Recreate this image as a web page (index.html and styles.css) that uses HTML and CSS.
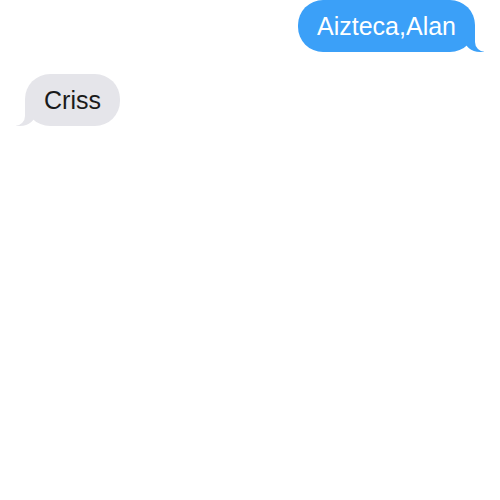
FILE: index.html
```html
<!DOCTYPE html>
<html lang="en">
<head>
  <meta charset="UTF-8"/>
  <title>Chat</title>
  <link rel="stylesheet" href="styles.css">
</head>
<body>
  <div class="chat">
    <div class="row me">
      <div class="bubble sent">Aizteca,Alan</div>
    </div>
    <div class="row them">
      <div class="bubble received">Criss</div>
    </div>
  </div>
</body>
</html>
```
FILE: styles.css
```css
* {
  margin: 0; padding: 0;
  box-sizing: border-box;
}

body {
  font-family: "Liberation Sans", Arial, sans-serif;
  background: #fff;
}

.chat {
  display: flex;
  flex-direction: column;
  gap: 22px;
  padding: 0 25px;
}

.row {
  display: flex;
}

.row.me { justify-content: flex-end; }
.row.them { justify-content: flex-start; }

.bubble {
  position: relative;
  font-size: 25px;
  line-height: 28px;
  padding: 12px 19px;
  border-radius: 25px;
}

.sent {
  background: #3ba0f8;
  color: #fff;
}

.received {
  background: #e5e5ea;
  color: #1a1a1a;
}

/* tails */
.bubble::before,
.bubble::after {
  content: "";
  position: absolute;
  bottom: 0;
  height: 25px;
}

.sent::before {
  right: -9px;
  width: 20px;
  background: #3ba0f8;
  border-bottom-left-radius: 16px 14px;
}

.sent::after {
  right: -26px;
  width: 26px;
  background: #fff;
  border-bottom-left-radius: 10px;
}

.received::before {
  left: -9px;
  width: 20px;
  background: #e5e5ea;
  border-bottom-right-radius: 16px 14px;
}

.received::after {
  left: -26px;
  width: 26px;
  background: #fff;
  border-bottom-right-radius: 10px;
}
```
